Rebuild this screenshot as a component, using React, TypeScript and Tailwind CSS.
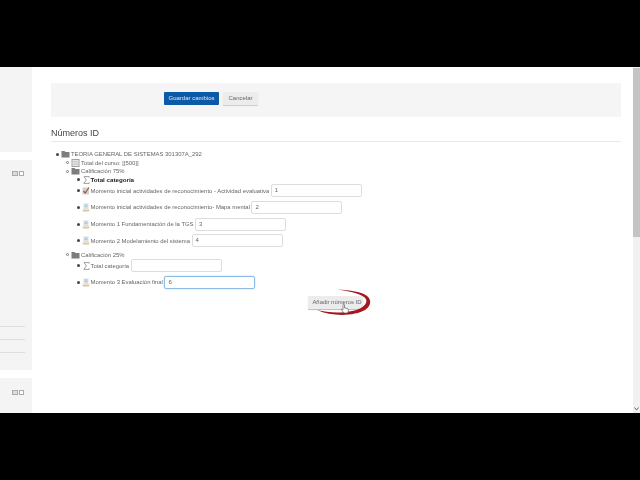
type IconKind = "sigma" | "quiz" | "assign";

function FolderIcon() {
  return (
    <svg width="9" height="8" viewBox="0 0 9 8" className="shrink-0">
      <path d="M0.5 1h3l1 1H8.5v5.5H.5z" fill="#7d7d7d" />
    </svg>
  );
}

function SheetIcon() {
  return (
    <svg width="9" height="8" viewBox="0 0 9 8" className="shrink-0">
      <rect x="1" y="0.5" width="7" height="7" fill="#e8e8e8" stroke="#a0a0a0" />
      <path d="M2.5 2.5h4M2.5 4h4M2.5 5.5h4" stroke="#bcbcbc" strokeWidth="0.7" />
    </svg>
  );
}

function GradeIcon({ kind }: { kind: IconKind }) {
  if (kind === "sigma") {
    return (
      <svg width="7" height="8" viewBox="0 0 7 8" className="shrink-0">
        <path d="M6.2 1.6V.6H1l2.4 3.2L.8 7.4h5.4V6.3" fill="none" stroke="#777" strokeWidth="0.7" />
      </svg>
    );
  }
  if (kind === "quiz") {
    return (
      <svg width="8" height="9" viewBox="0 0 8 9" className="shrink-0">
        <rect x="0.5" y="1.5" width="6.5" height="7" fill="#c9d3da" />
        <path d="M1.5 5l1.7 2L7 1.5" fill="none" stroke="#b5502e" strokeWidth="1.2" />
      </svg>
    );
  }
  return (
    <svg width="8" height="9" viewBox="0 0 8 9" className="shrink-0">
      <rect x="1.5" y="0.5" width="5" height="5.5" fill="#d6e2ec" />
      <path d="M0.5 6.5h7l-.6 2H1z" fill="#e2c49c" />
      <path d="M2.5 2h3M2.5 3.5h3" stroke="#a3b7c8" strokeWidth="0.6" />
    </svg>
  );
}

function Bullet({ hollow }: { hollow?: boolean }) {
  return hollow ? (
    <span className="h-[3px] w-[3px] shrink-0 rounded-full border-[0.7px] border-[#777]" />
  ) : (
    <span className="h-[3px] w-[3px] shrink-0 rounded-full bg-[#444]" />
  );
}

function GradeRow({
  kind,
  label,
  value,
  hasInput,
  bold,
  focused,
  rowClass,
}: {
  kind: IconKind;
  label: string;
  value?: string;
  hasInput?: boolean;
  bold?: boolean;
  focused?: boolean;
  rowClass: string;
}) {
  return (
    <div className={`flex items-center ${rowClass}`}>
      <Bullet />
      <span className="ml-[2.5px] flex w-[8px] justify-center">
        <GradeIcon kind={kind} />
      </span>
      <span className={bold ? "ml-[0.5px] text-[6.2px] font-bold text-[#222]" : "ml-[0.5px] text-[#666]"}>
        {label}
      </span>
      {hasInput && (
        <div
          className={`ml-[1.5px] flex h-[13px] w-[91px] items-center rounded-[2px] border bg-white pb-[1px] pl-[3px] text-[6px] text-[#666] ${
            focused ? "border-[#8dbce6] shadow-[0_0_2px_#b5d4f0]" : "border-[#dddddd]"
          }`}
        >
          {value}
        </div>
      )}
    </div>
  );
}

function BlockIcons() {
  return (
    <div className="flex justify-end gap-[1px] pr-[8px]">
      <span className="h-[5px] w-[6px] border border-[#aaa] bg-[#ddd]" />
      <span className="h-[5px] w-[5px] border border-[#aaa] bg-white" />
    </div>
  );
}

export default function App() {
  return (
    <div className="flex h-[480px] w-[640px] flex-col overflow-hidden bg-black font-['Liberation_Sans',Arial,sans-serif]">
      <div className="h-[67px] shrink-0" />
      <div className="flex h-[346px] shrink-0 bg-white">
        <aside className="flex w-[32px] shrink-0 flex-col gap-[8px] blur-[0.3px]">
          <div className="h-[85px] bg-[#f4f4f4]" />
          <div className="flex h-[210px] flex-col bg-[#f4f4f4] pt-[11px]">
            <BlockIcons />
            <div className="mt-[150px] h-[1px] w-[25px] bg-[#dedede]" />
            <div className="mt-[12px] h-[1px] w-[25px] bg-[#dedede]" />
            <div className="mt-[12px] h-[1px] w-[25px] bg-[#dedede]" />
          </div>
          <div className="flex flex-1 flex-col bg-[#f4f4f4] pt-[12px]">
            <BlockIcons />
          </div>
        </aside>

        <main className="relative min-w-0 flex-1 pl-[19px] pr-[12px] pt-[16px] blur-[0.35px]">
          <div className="flex h-[34px] items-center bg-[#f5f5f5] pl-[113px]">
            <button className="-mt-[3px] h-[13px] w-[55px] rounded-[1px] bg-[#0a5aa8] text-[6px] leading-[13px] text-[#dce8f4]">
              Guardar cambios
            </button>
            <button className="-mt-[3px] ml-[4px] h-[13px] w-[35px] rounded-[1px] bg-[#ececec] text-[6px] leading-[13px] text-[#666] shadow-[0_1px_1px_#ccc]">
              Cancelar
            </button>
          </div>

          <h3 className="mt-[10px] border-b border-[#eaeaea] pb-[2px] text-[9px] leading-[12px] text-[#444]">
            Números ID
          </h3>

          <div className="pl-[5px] pt-[7.5px] text-[5.9px] leading-[8px]">
            <div className="flex h-[9px] items-center gap-[2px] text-[#666]">
              <Bullet />
              <FolderIcon />
              <span className="-ml-[1px]">TEORIA GENERAL DE SISTEMAS 301307A_292</span>
            </div>

            <div className="pl-[10px]">
              <div className="flex h-[8px] items-center gap-[2px] text-[#666]">
                <Bullet hollow />
                <SheetIcon />
                <span className="-ml-[1px]">Total del curso: [[500]]</span>
              </div>
              <div className="flex h-[9px] items-center gap-[2px] text-[#666]">
                <Bullet hollow />
                <FolderIcon />
                <span className="-ml-[1px]">Calificación 75%</span>
              </div>
              <div className="pl-[10.5px]">
                <GradeRow kind="sigma" label="Total categoría" bold rowClass="h-[8px]" />
                <GradeRow
                  kind="quiz"
                  label="Momento inicial actividades de reconocimiento - Actividad evaluativa"
                  value="1"
                  hasInput
                  rowClass="h-[14px]"
                />
                <GradeRow
                  kind="assign"
                  label="Momento inicial actividades de reconocimiento- Mapa mental"
                  value="2"
                  hasInput
                  rowClass="h-[14px] mt-[2.5px]"
                />
                <GradeRow
                  kind="assign"
                  label="Momento 1 Fundamentación de la TGS"
                  value="3"
                  hasInput
                  rowClass="h-[14px] mt-[3px]"
                />
                <GradeRow
                  kind="assign"
                  label="Momento 2 Modelamiento del sistema"
                  value="4"
                  hasInput
                  rowClass="h-[14px] mt-[2.5px]"
                />
              </div>
              <div className="mt-[2.5px] flex h-[9px] items-center gap-[2px] text-[#666]">
                <Bullet hollow />
                <FolderIcon />
                <span className="-ml-[1px]">Calificación 25%</span>
              </div>
              <div className="pl-[10.5px]">
                <GradeRow kind="sigma" label="Total categoría" hasInput rowClass="h-[13px]" />
                <GradeRow
                  kind="assign"
                  label="Momento 3 Evaluación final"
                  value="6"
                  hasInput
                  focused
                  rowClass="h-[14px] mt-[3px]"
                />
              </div>
            </div>
          </div>

          <button className="ml-[257px] mt-[7px] block h-[13px] w-[55px] whitespace-nowrap rounded-[1px] bg-[#ececec] pl-[3px] text-[5.9px] leading-[13px] text-[#666] shadow-[0_1px_1px_#bbb]">
            Añadir números ID
          </button>

          {/* hand-drawn red mark and pointer from the recording */}
          <svg
            width="70"
            height="30"
            viewBox="0 0 70 30"
            className="absolute left-[278px] top-[221px]"
          >
            <path
              d="M27 1.5C40 2 52 4 57 8C62 12 61 18 55 22C45 28 22 29 7 22C22 26 42 25 51 20C57 16 58 12 54 9C48 5 38 3 27 1.5z"
              fill="#a5161f"
            />
            <path
              d="M33 16.5c.8-.6 1.5-.2 1.5.6V20l3 .6c.8.2 1 .7.9 1.4l-.6 3h-4l-2.2-3c-.5-.8.2-1.4 1-.8l.4.4z"
              fill="#fff"
              stroke="#444"
              strokeWidth="0.6"
            />
          </svg>
        </main>

        <div className="flex w-[7px] shrink-0 flex-col bg-[#f1f1f1]">
          <div className="mt-[1px] h-[169px] bg-[#c4c4c4]" />
          <div className="flex-1" />
          <svg width="7" height="6" viewBox="0 0 7 6" className="mb-[1px]">
            <path d="M1.5 1.5L3.5 4l2-2.5" fill="none" stroke="#666" strokeWidth="1" />
          </svg>
        </div>
      </div>
      <div className="flex-1" />
    </div>
  );
}
